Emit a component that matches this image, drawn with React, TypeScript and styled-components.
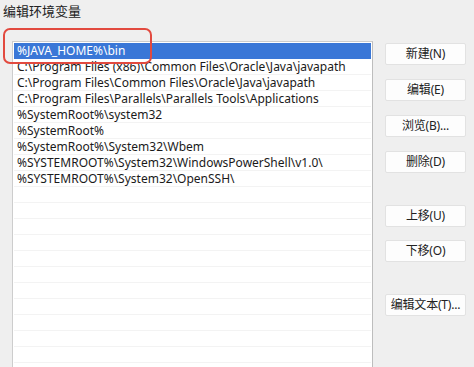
import React from 'react'
import styled, { createGlobalStyle } from 'styled-components'

const GlobalStyle = createGlobalStyle`
  html, body {
    margin: 0;
    padding: 0;
    background: #efefef;
    overflow: hidden;
  }
  body {
    font-family: 'Noto Sans', 'Noto Sans CJK SC', sans-serif;
  }
`

const Window = styled.div`
  position: relative;
  width: 474px;
  height: 367px;
  background: #efefef;
  overflow: hidden;
`

const Title = styled.div`
  height: 22px;
  padding: 1px 0 0 3px;
  box-sizing: border-box;
  font-size: 13px;
  line-height: 20px;
  color: #222;
`

const Body = styled.div`
  display: flex;
  padding: 19px 0 0 12px;
`

const PathList = styled.div`
  width: 361px;
  height: 340px;
  box-sizing: border-box;
  border: 1px solid #cdcdcd;
  border-right-color: #bdbdbd;
  background: #fff;
  padding: 1px 1px 0 1px;
`

const Row = styled.div<{ selected?: boolean }>`
  height: 16px;
  box-sizing: border-box;
  padding-left: 3px;
  font-size: 12px;
  line-height: 16px;
  white-space: nowrap;
  color: ${(p) => (p.selected ? '#fff' : '#1a1a1a')};
  background: ${(p) => (p.selected ? '#3a77d7' : 'transparent')};
  border-bottom: 1px solid ${(p) => (p.selected ? '#3a77d7' : '#f3f3f3')};
`

const Buttons = styled.div`
  display: flex;
  flex-direction: column;
  padding: 2px 0 0 12px;
`

const Btn = styled.button<{ gap?: number }>`
  width: 81px;
  height: 22px;
  margin-bottom: ${(p) => p.gap ?? 14}px;
  border: 1px solid #e2e2e2;
  border-radius: 2px;
  background: #fdfdfd;
  font-family: 'Noto Sans', 'Noto Sans CJK SC', sans-serif;
  font-size: 12px;
  letter-spacing: -0.2px;
  color: #222;
  padding: 0;
  line-height: 20px;
  white-space: nowrap;
`

const Annotation = styled.div`
  position: absolute;
  left: 3px;
  top: 28px;
  width: 145px;
  height: 32px;
  border: 2px solid #e24a3f;
  border-radius: 7px;
`

const paths = [
  '%JAVA_HOME%\\bin',
  'C:\\Program Files (x86)\\Common Files\\Oracle\\Java\\javapath',
  'C:\\Program Files\\Common Files\\Oracle\\Java\\javapath',
  'C:\\Program Files\\Parallels\\Parallels Tools\\Applications',
  '%SystemRoot%\\system32',
  '%SystemRoot%',
  '%SystemRoot%\\System32\\Wbem',
  '%SYSTEMROOT%\\System32\\WindowsPowerShell\\v1.0\\',
  '%SYSTEMROOT%\\System32\\OpenSSH\\',
]

const rows = [...paths, ...Array(12).fill('')]

export default function App() {
  return (
    <Window>
      <GlobalStyle />
      <Title>编辑环境变量</Title>
      <Body>
        <PathList>
          {rows.map((p, i) => (
            <Row key={i} selected={i === 0}>
              {p}
            </Row>
          ))}
        </PathList>
        <Buttons>
          <Btn>新建(N)</Btn>
          <Btn>编辑(E)</Btn>
          <Btn>浏览(B)...</Btn>
          <Btn gap={32}>删除(D)</Btn>
          <Btn gap={13}>上移(U)</Btn>
          <Btn gap={32}>下移(O)</Btn>
          <Btn>编辑文本(T)...</Btn>
        </Buttons>
      </Body>
      <Annotation />
    </Window>
  )
}
